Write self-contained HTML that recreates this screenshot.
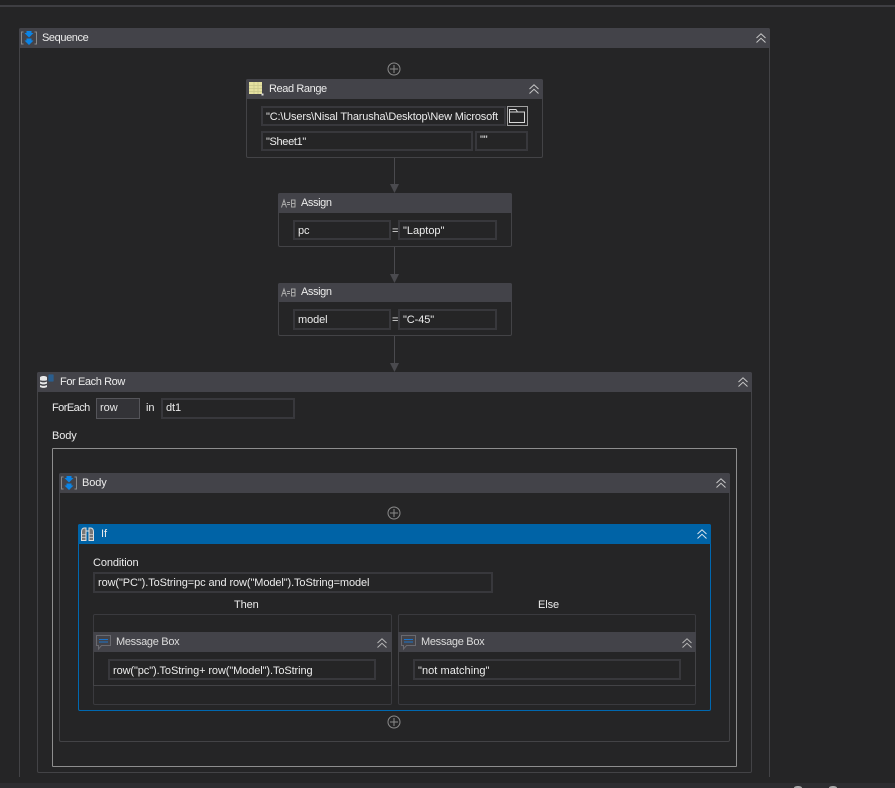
<!DOCTYPE html>
<html><head><meta charset="utf-8"><style>
html,body{margin:0;padding:0;background:#252526;width:895px;height:788px;overflow:hidden}
body{position:relative;font-family:"Liberation Sans",sans-serif;font-size:11px;color:#ececec}
.a{position:absolute;box-sizing:border-box}
.box{position:absolute;box-sizing:border-box;border:1px solid #434346;border-radius:2px}
.h{position:absolute;box-sizing:border-box;background:#434349;height:20px;border-radius:2px 2px 0 0}
.t{position:absolute;white-space:nowrap;line-height:14px;letter-spacing:-.1px}
.l{letter-spacing:-.4px}
.m{letter-spacing:-.3px}
.i{position:absolute;box-sizing:border-box;border:2px solid #38383c;background:#252526;white-space:nowrap;overflow:hidden;line-height:16px;padding-left:3px;letter-spacing:-.1px;color:#ececec}
svg{position:absolute;overflow:visible}
</style></head><body>
<div class="a" style="left:0;top:0;width:895px;height:6px;background:#222223"></div>
<div class="a" style="left:0;top:5px;width:895px;height:2px;background:#3e3e42"></div>
<div class="a" style="left:0;top:783px;width:895px;height:5px;background:#2d2d30"></div>

<!-- Sequence -->
<div class="a" style="left:19px;top:28px;width:751px;height:749px;border:1px solid #434346;border-bottom:0;border-radius:2px 2px 0 0"></div>
<div class="h" style="left:19px;top:28px;width:751px"></div>
<svg style="left:21px;top:30px" width="16" height="15" viewBox="0 0 16 15"><path d="M2.500 2H.5V14H2.500M13.500 2H15.500V14H13.500" fill="none" stroke="#8a8a8a"/><path d="M5.500 1H10.500V3H12.500L8 7.500 3.500 3H5.500ZM5.500 8.500H10.500V10.500H12.500L8 15 3.500 10.500H5.500Z" fill="#0a84e6"/></svg>
<div class="t l" style="left:42px;top:31px">Sequence</div>
<svg style="left:756px;top:33px" width="10" height="10" viewBox="0 0 10 10"><path d="M.5 5 5 .8 9.500 5M.5 9.500 5 5.300 9.500 9.500" fill="none" stroke="#c8c8c8"/></svg>
<svg style="left:387px;top:62px" width="14" height="14" viewBox="0 0 14 14"><circle cx="7" cy="7" r="6" fill="none" stroke="#8a8a8a"/><path d="M7 3V11M3 7H11" stroke="#8a8a8a"/></svg>

<!-- Read Range -->
<div class="box" style="left:246px;top:79px;width:297px;height:79px"></div>
<div class="h" style="left:246px;top:79px;width:297px"></div>
<svg style="left:248px;top:81px" width="16" height="15" viewBox="0 0 16 15"><rect x="1" y="1" width="13" height="12" fill="#e4e0a0"/><path d="M1 4.500H14M1 7.500H14M1 10.500H14M6 1V13M10 1V13" stroke="#c8c68c" stroke-width=".8"/><rect x="13.500" y="12.500" width="2" height="2" fill="#ddd"/></svg>
<div class="t l" style="left:269px;top:82px">Read Range</div>
<svg style="left:529px;top:84px" width="10" height="10" viewBox="0 0 10 10"><path d="M.5 5 5 .8 9.500 5M.5 9.500 5 5.300 9.500 9.500" fill="none" stroke="#c8c8c8"/></svg>
<div class="i" style="left:261px;top:106px;width:245px;height:20px;letter-spacing:-.17px;line-height:18px">"C:\Users\Nisal Tharusha\Desktop\New Microsoft</div>
<div class="a" style="left:507px;top:106px;width:21px;height:20px;border:1px solid #a0a0a0"></div>
<svg style="left:509px;top:108px" width="17" height="16" viewBox="0 0 17 16"><path d="M.5 14.500V1.500H7L8.500 4H15.500V14.500ZM.5 4H8.500" fill="none" stroke="#d8d8d8"/></svg>
<div class="i" style="left:261px;top:131px;width:212px;height:20px;letter-spacing:-.35px;line-height:18px">"Sheet1"</div>
<div class="i" style="left:475px;top:131px;width:53px;height:20px;line-height:15px">""</div>

<!-- arrows -->
<div class="a" style="left:394px;top:158px;width:1px;height:28px;background:#4a4a4e"></div>
<svg style="left:390px;top:184px" width="9" height="9"><path d="M0 0H9L4.500 9Z" fill="#4a4a4e"/></svg>
<div class="a" style="left:394px;top:247px;width:1px;height:30px;background:#4a4a4e"></div>
<svg style="left:390px;top:274px" width="9" height="9"><path d="M0 0H9L4.500 9Z" fill="#4a4a4e"/></svg>
<div class="a" style="left:394px;top:336px;width:1px;height:28px;background:#4a4a4e"></div>
<svg style="left:390px;top:363px" width="9" height="9"><path d="M0 0H9L4.500 9Z" fill="#4a4a4e"/></svg>

<!-- Assign 1 -->
<div class="box" style="left:278px;top:193px;width:234px;height:54px"></div>
<div class="h" style="left:278px;top:193px;width:234px"></div>
<svg style="left:281px;top:199px" width="15" height="9" viewBox="0 0 15 9"><path d="M.5 8.500 3 1 5.500 8.500M1.500 5.500H4.500M6 3.500H9M6 5.500H9M10.500 1H14V8H10.500ZM10.500 4.500H14" fill="none" stroke="#a8a8a8"/></svg>
<div class="t l" style="left:301px;top:196px">Assign</div>
<div class="i" style="left:293px;top:220px;width:98px;height:20px;line-height:18px">pc</div>
<div class="t" style="left:392px;top:224px">=</div>
<div class="i" style="left:398px;top:220px;width:99px;height:20px;line-height:18px;letter-spacing:0">"Laptop"</div>

<!-- Assign 2 -->
<div class="box" style="left:278px;top:283px;width:234px;height:53px"></div>
<div class="h" style="left:278px;top:283px;width:234px;height:19px"></div>
<svg style="left:281px;top:288px" width="15" height="9" viewBox="0 0 15 9"><path d="M.5 8.500 3 1 5.500 8.500M1.500 5.500H4.500M6 3.500H9M6 5.500H9M10.500 1H14V8H10.500ZM10.500 4.500H14" fill="none" stroke="#a8a8a8"/></svg>
<div class="t l" style="left:301px;top:285px">Assign</div>
<div class="i" style="left:293px;top:309px;width:98px;height:21px;line-height:18px">model</div>
<div class="t" style="left:392px;top:313px">=</div>
<div class="i" style="left:398px;top:309px;width:99px;height:21px;line-height:18px">"C-45"</div>

<!-- For Each Row -->
<div class="box" style="left:37px;top:372px;width:715px;height:401px"></div>
<div class="h" style="left:37px;top:372px;width:715px"></div>
<svg style="left:39px;top:374px" width="15" height="15" viewBox="0 0 15 15"><path d="M1 3.500C1 1.500 8 1.500 8 3.500V6C8 7 1 7 1 6ZM1 7.500C3 8.700 6 8.700 8 7.500V9.500C6 10.700 3 10.700 1 9.500ZM1 11C3 12.200 6 12.200 8 11V13C6 14.200 3 14.200 1 13Z" fill="#e8e8e8"/><path d="M10 1H14V7H10ZM10 3H14M10 5H14M12 1V7" fill="none" stroke="#1c6fb8" stroke-width=".8"/></svg>
<div class="t l" style="left:60px;top:375px">For Each Row</div>
<svg style="left:738px;top:377px" width="10" height="10" viewBox="0 0 10 10"><path d="M.5 5 5 .8 9.500 5M.5 9.500 5 5.300 9.500 9.500" fill="none" stroke="#c8c8c8"/></svg>
<div class="t" style="left:52px;top:401px;letter-spacing:-.55px">ForEach</div>
<div class="a" style="left:96px;top:398px;width:44px;height:21px;border:1px solid #55555a;background:#333337;padding-left:3px;line-height:19px;color:#e8e8e8">row</div>
<div class="t" style="left:146px;top:401px">in</div>
<div class="i" style="left:161px;top:398px;width:134px;height:21px">dt1</div>
<div class="t" style="left:52px;top:429px">Body</div>
<div class="a" style="left:52px;top:448px;width:685px;height:319px;border:1px solid #8e8e8e;border-radius:1px"></div>

<!-- Body -->
<div class="box" style="left:59px;top:473px;width:671px;height:269px"></div>
<div class="h" style="left:59px;top:473px;width:671px"></div>
<svg style="left:61px;top:475px" width="16" height="15" viewBox="0 0 16 15"><path d="M2.500 2H.5V14H2.500M13.500 2H15.500V14H13.500" fill="none" stroke="#8a8a8a"/><path d="M5.500 1H10.500V3H12.500L8 7.500 3.500 3H5.500ZM5.500 8.500H10.500V10.500H12.500L8 15 3.500 10.500H5.500Z" fill="#0a84e6"/></svg>
<div class="t" style="left:82px;top:476px">Body</div>
<svg style="left:716px;top:478px" width="10" height="10" viewBox="0 0 10 10"><path d="M.5 5 5 .8 9.500 5M.5 9.500 5 5.300 9.500 9.500" fill="none" stroke="#c8c8c8"/></svg>
<svg style="left:387px;top:506px" width="14" height="14" viewBox="0 0 14 14"><circle cx="7" cy="7" r="6" fill="none" stroke="#8a8a8a"/><path d="M7 3V11M3 7H11" stroke="#8a8a8a"/></svg>

<!-- If -->
<div class="a" style="left:78px;top:524px;width:633px;height:187px;border:1px solid #0068b0;border-radius:2px"></div>
<div class="h" style="left:78px;top:524px;width:633px;background:#0063a6"></div>
<svg style="left:80px;top:526px" width="15" height="16" viewBox="0 0 15 16"><path d="M1.500 14.500V6C1.500 3.500 2.500 2 4.500 2H6V14.500ZM9 14.500V2H10.500C12.500 2 13.500 3.500 13.500 6V14.500ZM6 5H9" fill="#777" stroke="#e0e0e0" stroke-width="1"/><path d="M1.500 8.500H6M9 8.500H13.500M1.500 11.500H6M9 11.500H13.500" stroke="#d0d0d0" stroke-width=".8"/></svg>
<div class="t" style="left:101px;top:527px">If</div>
<svg style="left:697px;top:529px" width="10" height="10" viewBox="0 0 10 10"><path d="M.5 5 5 .8 9.500 5M.5 9.500 5 5.300 9.500 9.500" fill="none" stroke="#d8e4ee"/></svg>
<div class="t" style="left:93px;top:556px">Condition</div>
<div class="i" style="left:93px;top:572px;width:400px;height:21px;padding-left:3px;line-height:18px">row("PC").ToString=pc and row("Model").ToString=model</div>
<div class="t" style="left:234px;top:598px">Then</div>
<div class="t" style="left:538px;top:598px">Else</div>

<!-- Then -->
<div class="box" style="left:93px;top:614px;width:299px;height:91px;border-color:#3a3a3e"></div>
<div class="h" style="left:93px;top:632px;width:299px;border-radius:0"></div>
<div class="a" style="left:93px;top:651px;width:299px;height:35px;border:1px solid #434346;border-top:0"></div>
<svg style="left:96px;top:635px" width="15" height="15" viewBox="0 0 15 15"><path d="M.5.500H14.500V10.500H5.500L2.500 14V10.500H.5Z" fill="none" stroke="#6a6a70"/><path d="M3 4.500H12M3 7H12" stroke="#1e73c8"/></svg>
<div class="t m" style="left:116px;top:635px;color:#dcdcdc">Message Box</div>
<svg style="left:377px;top:638px" width="10" height="10" viewBox="0 0 10 10"><path d="M.5 5 5 .8 9.500 5M.5 9.500 5 5.300 9.500 9.500" fill="none" stroke="#b8b8b8"/></svg>
<div class="i" style="left:108px;top:659px;width:268px;height:21px;line-height:20px">row("pc").ToString+ row("Model").ToString</div>

<!-- Else -->
<div class="box" style="left:398px;top:614px;width:298px;height:91px;border-color:#3a3a3e"></div>
<div class="h" style="left:398px;top:632px;width:298px;border-radius:0"></div>
<div class="a" style="left:398px;top:651px;width:298px;height:35px;border:1px solid #434346;border-top:0"></div>
<svg style="left:401px;top:635px" width="15" height="15" viewBox="0 0 15 15"><path d="M.5.500H14.500V10.500H5.500L2.500 14V10.500H.5Z" fill="none" stroke="#6a6a70"/><path d="M3 4.500H12M3 7H12" stroke="#1e73c8"/></svg>
<div class="t m" style="left:421px;top:635px;color:#dcdcdc">Message Box</div>
<svg style="left:682px;top:638px" width="10" height="10" viewBox="0 0 10 10"><path d="M.5 5 5 .8 9.500 5M.5 9.500 5 5.300 9.500 9.500" fill="none" stroke="#b8b8b8"/></svg>
<div class="i" style="left:413px;top:659px;width:268px;height:21px;line-height:20px;letter-spacing:.05px">"not matching"</div>

<svg style="left:387px;top:715px" width="14" height="14" viewBox="0 0 14 14"><circle cx="7" cy="7" r="6" fill="none" stroke="#8a8a8a"/><path d="M7 3V11M3 7H11" stroke="#8a8a8a"/></svg>
<!-- bottom toolbar fragments -->
<svg style="left:790px;top:786px" width="60" height="2"><path d="M4 2C4 .5 6 0 8 0S12 .5 12 2ZM39 2C39 .5 41 0 43 0S47 .5 47 2Z" fill="#a8a8a8"/></svg>
</body></html>
